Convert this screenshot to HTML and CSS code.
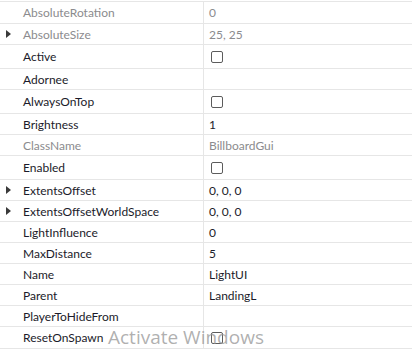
FILE: index.html
```html
<!DOCTYPE html>
<html lang="en">
  <head>
    <meta charset="UTF-8" />
    <meta name="viewport" content="width=device-width, initial-scale=1.0" />
    <title>Properties - BillboardGui</title>
    <link rel="stylesheet" href="styles.css">
  </head>
  <body>
    <div class="panel">
      <div class="prop h23 readonly">
        <div class="name">AbsoluteRotation</div>
        <div class="value">0</div>
      </div>
      <div class="prop readonly">
        <div class="name"><span class="arrow"></span>AbsoluteSize</div>
        <div class="value">25, 25</div>
      </div>
      <div class="prop h24">
        <div class="name">Active</div>
        <div class="value"><span class="check"></span></div>
      </div>
      <div class="prop">
        <div class="name">Adornee</div>
        <div class="value"></div>
      </div>
      <div class="prop h24">
        <div class="name">AlwaysOnTop</div>
        <div class="value"><span class="check"></span></div>
      </div>
      <div class="prop">
        <div class="name">Brightness</div>
        <div class="value">1</div>
      </div>
      <div class="prop readonly">
        <div class="name">ClassName</div>
        <div class="value">BillboardGui</div>
      </div>
      <div class="prop h24">
        <div class="name">Enabled</div>
        <div class="value"><span class="check"></span></div>
      </div>
      <div class="prop">
        <div class="name"><span class="arrow"></span>ExtentsOffset</div>
        <div class="value">0, 0, 0</div>
      </div>
      <div class="prop">
        <div class="name"><span class="arrow"></span>ExtentsOffsetWorldSpace</div>
        <div class="value">0, 0, 0</div>
      </div>
      <div class="prop">
        <div class="name">LightInfluence</div>
        <div class="value">0</div>
      </div>
      <div class="prop">
        <div class="name">MaxDistance</div>
        <div class="value">5</div>
      </div>
      <div class="prop">
        <div class="name">Name</div>
        <div class="value">LightUI</div>
      </div>
      <div class="prop">
        <div class="name">Parent</div>
        <div class="value">LandingL</div>
      </div>
      <div class="prop">
        <div class="name">PlayerToHideFrom</div>
        <div class="value"></div>
      </div>
      <div class="prop h22">
        <div class="name">ResetOnSpawn</div>
        <div class="value"><span class="check"></span></div>
      </div>
    </div>

    <div class="watermark">Activate Windows</div>
  </body>
</html>
```

FILE: styles.css
```css
:root {
  --line: #e6e6e6;
  --text: #1b1b2a;
  --muted: #8b8b8e;
  --arrow: #3a3a3a;
}

body {
  margin: 0;
  background: #fff;
  font-family: "Lato", sans-serif;
  font-size: 12px;
  color: var(--text);
  overflow: hidden;
}

.panel {
  padding-top: 1px;
}

.panel .prop:first-child {
  border-top: 1px solid var(--line);
}

.prop {
  display: grid;
  grid-template-columns: 204px 1fr;
  height: 21px;
  box-sizing: border-box;
  border-bottom: 1px solid var(--line);
}
.prop.h22 { height: 22px; }
.prop.h23 { height: 23px; }
.prop.h24 { height: 24px; }

.name,
.value {
  display: flex;
  align-items: center;
  white-space: nowrap;
}

.name {
  position: relative;
  padding-left: 23px;
  border-right: 1px solid var(--line);
}

.value {
  padding-left: 5px;
}

.readonly .name,
.readonly .value {
  color: var(--muted);
}

/* expand triangle */
.arrow {
  position: absolute;
  left: 6px;
  top: 50%;
  margin-top: -4px;
  width: 0;
  height: 0;
  border-left: 5px solid var(--arrow);
  border-top: 4px solid transparent;
  border-bottom: 4px solid transparent;
}

.check {
  width: 10px;
  height: 10px;
  margin-left: 2px;
  border: 1px solid #5c5c5c;
  border-radius: 2px;
}

.watermark {
  position: absolute;
  left: 108px;
  top: 324px;
  font-family: "Open Sans", sans-serif;
  font-size: 19px;
  color: rgba(150, 150, 150, 0.75);
  pointer-events: none;
}
```
